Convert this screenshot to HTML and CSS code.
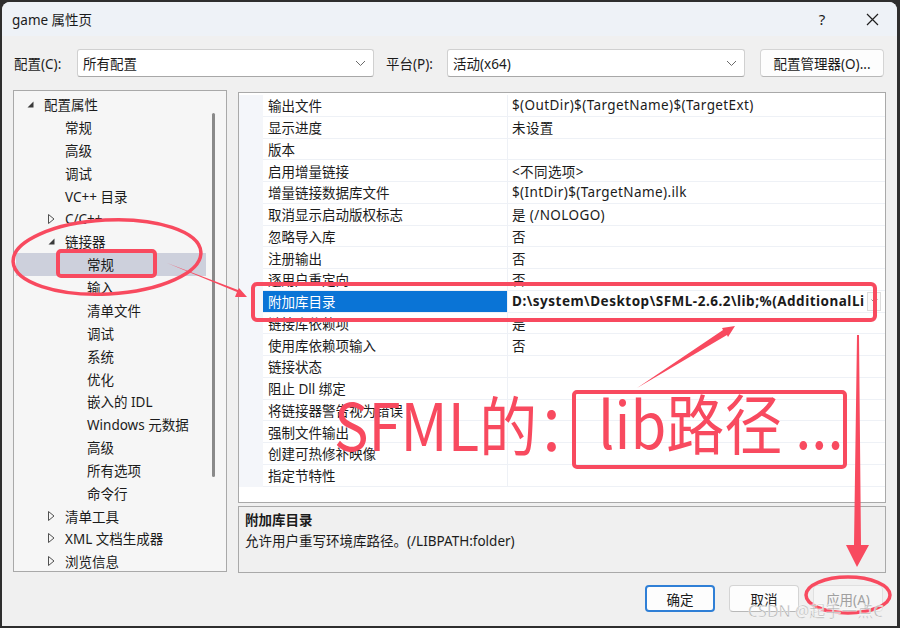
FILE: index.html
```html
<!DOCTYPE html>
<html>
<head>
<meta charset="utf-8">
<link rel="stylesheet" href="styles.css">
</head>
<body>
<div class="window">
  <div class="titlebar">
    <span class="title">game 属性页</span>
    <span class="tb-btn tb-help">?</span>
    <span class="tb-btn tb-close"><svg width="13" height="13" viewBox="0 0 13 13"><path d="M1 1L12 12M12 1L1 12" stroke="#1f1f1f" stroke-width="1.2"/></svg></span>
  </div>
  <div class="content">
    <div class="toprow">
      <span class="lbl lbl-config">配置(C):</span>
      <div class="select sel-config"><span class="sel-text">所有配置</span><svg class="chev" width="11" height="7" viewBox="0 0 11 7"><path d="M1 1L5.5 5.5L10 1" fill="none" stroke="#6a6a6a" stroke-width="1"/></svg></div>
      <span class="lbl lbl-platform">平台(P):</span>
      <div class="select sel-platform"><span class="sel-text">活动(x64)</span><svg class="chev" width="11" height="7" viewBox="0 0 11 7"><path d="M1 1L5.5 5.5L10 1" fill="none" stroke="#6a6a6a" stroke-width="1"/></svg></div>
      <button class="btn btn-mgr">配置管理器(O)...</button>
    </div>
    <div class="main">
      <div class="tree">
        <div class="tree-list">
          <div class="trow l0"><span class="tg"><svg width="7" height="7" viewBox="0 0 7 7"><path d="M6.5 0.5V6.5H0.5Z" fill="#3a3a3a"/></svg></span>配置属性</div>
          <div class="trow l1"><span class="tg"></span>常规</div>
          <div class="trow l1"><span class="tg"></span>高级</div>
          <div class="trow l1"><span class="tg"></span>调试</div>
          <div class="trow l1"><span class="tg"></span>VC++ 目录</div>
          <div class="trow l1"><span class="tg"><svg width="7" height="10" viewBox="0 0 7 10"><path d="M0.5 0.5L6 5L0.5 9.5Z" fill="none" stroke="#505050"/></svg></span>C/C++</div>
          <div class="trow l1"><span class="tg"><svg width="7" height="7" viewBox="0 0 7 7"><path d="M6.5 0.5V6.5H0.5Z" fill="#3a3a3a"/></svg></span>链接器</div>
          <div class="trow l2 sel"><span class="tg"></span>常规</div>
          <div class="trow l2"><span class="tg"></span>输入</div>
          <div class="trow l2"><span class="tg"></span>清单文件</div>
          <div class="trow l2"><span class="tg"></span>调试</div>
          <div class="trow l2"><span class="tg"></span>系统</div>
          <div class="trow l2"><span class="tg"></span>优化</div>
          <div class="trow l2"><span class="tg"></span>嵌入的 IDL</div>
          <div class="trow l2"><span class="tg"></span>Windows 元数据</div>
          <div class="trow l2"><span class="tg"></span>高级</div>
          <div class="trow l2"><span class="tg"></span>所有选项</div>
          <div class="trow l2"><span class="tg"></span>命令行</div>
          <div class="trow l1"><span class="tg"><svg width="7" height="10" viewBox="0 0 7 10"><path d="M0.5 0.5L6 5L0.5 9.5Z" fill="none" stroke="#505050"/></svg></span>清单工具</div>
          <div class="trow l1"><span class="tg"><svg width="7" height="10" viewBox="0 0 7 10"><path d="M0.5 0.5L6 5L0.5 9.5Z" fill="none" stroke="#505050"/></svg></span>XML 文档生成器</div>
          <div class="trow l1"><span class="tg"><svg width="7" height="10" viewBox="0 0 7 10"><path d="M0.5 0.5L6 5L0.5 9.5Z" fill="none" stroke="#505050"/></svg></span>浏览信息</div>
        </div>
        <div class="tree-scroll"><div class="thumb"></div></div>
      </div>
      <div class="right">
        <div class="grid">
          <div class="grow"><span class="gut"></span><span class="nm">输出文件</span><span class="vl">$(OutDir)$(TargetName)$(TargetExt)</span></div>
          <div class="grow"><span class="gut"></span><span class="nm">显示进度</span><span class="vl">未设置</span></div>
          <div class="grow"><span class="gut"></span><span class="nm">版本</span><span class="vl"></span></div>
          <div class="grow"><span class="gut"></span><span class="nm">启用增量链接</span><span class="vl">&lt;不同选项&gt;</span></div>
          <div class="grow"><span class="gut"></span><span class="nm">增量链接数据库文件</span><span class="vl">$(IntDir)$(TargetName).ilk</span></div>
          <div class="grow"><span class="gut"></span><span class="nm">取消显示启动版权标志</span><span class="vl">是 (/NOLOGO)</span></div>
          <div class="grow"><span class="gut"></span><span class="nm">忽略导入库</span><span class="vl">否</span></div>
          <div class="grow"><span class="gut"></span><span class="nm">注册输出</span><span class="vl">否</span></div>
          <div class="grow"><span class="gut"></span><span class="nm">逐用户重定向</span><span class="vl">否</span></div>
          <div class="grow sel"><span class="gut"></span><span class="nm">附加库目录</span><span class="vl"><span class="vtext">D:\system\Desktop\SFML-2.6.2\lib;%(AdditionalLi</span><span class="dd"><svg width="7" height="5" viewBox="0 0 7 5"><path d="M0.5 0.5L3.5 3.5L6.5 0.5" fill="none" stroke="#8a8a8a"/></svg></span></span></div>
          <div class="grow"><span class="gut"></span><span class="nm">链接库依赖项</span><span class="vl">是</span></div>
          <div class="grow"><span class="gut"></span><span class="nm">使用库依赖项输入</span><span class="vl">否</span></div>
          <div class="grow"><span class="gut"></span><span class="nm">链接状态</span><span class="vl"></span></div>
          <div class="grow"><span class="gut"></span><span class="nm">阻止 Dll 绑定</span><span class="vl"></span></div>
          <div class="grow"><span class="gut"></span><span class="nm">将链接器警告视为错误</span><span class="vl"></span></div>
          <div class="grow"><span class="gut"></span><span class="nm">强制文件输出</span><span class="vl"></span></div>
          <div class="grow"><span class="gut"></span><span class="nm">创建可热修补映像</span><span class="vl"></span></div>
          <div class="grow"><span class="gut"></span><span class="nm">指定节特性</span><span class="vl"></span></div>
        </div>
        <div class="desc">
          <div class="desc-title">附加库目录</div>
          <div class="desc-text">允许用户重写环境库路径。(/LIBPATH:folder)</div>
        </div>
      </div>
    </div>
    <div class="footer">
      <button class="btn fbtn ok">确定</button>
      <button class="btn fbtn">取消</button>
      <button class="btn fbtn disabled">应用(A)</button>
    </div>
  </div>
</div>
<svg class="annot" width="900" height="628" viewBox="0 0 900 628">
  <g fill="none" stroke="#f84a5f">
    <ellipse cx="107" cy="257" rx="94" ry="37" stroke-width="3.5" transform="rotate(-3 107 257)"/>
    <rect x="58" y="251" width="97" height="25" rx="3" stroke-width="4"/>
    <rect x="253" y="284" width="622" height="36" rx="4" stroke-width="4"/>
    <rect x="574" y="392" width="271" height="75" rx="3" stroke-width="4"/>
    <ellipse cx="848" cy="595" rx="42" ry="18" stroke-width="3.5"/>
  </g>
  <g fill="#f84a5f">
    <polygon points="167,263 237,292 235,297 247,297 239,288 238,290"/>
    <polygon points="637,388 723,330 722,328 735,326 728,337 727,335"/>
    <polygon points="857,335 859,335 861,545 869,545 857,567 846,545 854,545"/>
  </g>
  <text class="big" transform="translate(334 451) scale(1 1.12)">SFML的：</text>
  <text class="big" transform="translate(598 449) scale(1 1.12)">lib路径 ...</text>
  <text class="wm" x="748" y="617">CSDN @起手一点C</text>
</svg>
</body>
</html>
```
FILE: styles.css
```css
* { box-sizing: border-box; }
html, body { margin: 0; padding: 0; }
body {
  width: 900px;
  height: 628px;
  background: #2e2e2e;
  font-family: "Noto Sans", "Noto Sans CJK SC", sans-serif;
  font-size: 13.5px;
  color: #1b1b1b;
  overflow: hidden;
  position: relative;
}
.window {
  margin: 2px 3px 0 2px;
  height: 624px;
  background: #f0f0f0;
  border-radius: 8px 8px 0 0;
  display: flex;
  flex-direction: column;
  overflow: hidden;
}
.titlebar {
  height: 34px;
  background: #eef2f7;
  display: flex;
  align-items: center;
  padding-left: 10px;
}
.title { flex: 1; font-size: 13.5px; }
.tb-btn {
  width: 46px;
  height: 34px;
  display: flex;
  align-items: center;
  justify-content: center;
  font-size: 15px;
}
.tb-help { margin-right: 4px; }
.tb-close { margin-right: 2px; }
.content {
  flex: 1;
  display: flex;
  flex-direction: column;
  padding: 13px 11px 0 11px;
}
.toprow {
  display: flex;
  align-items: center;
  height: 28px;
  padding: 0 2px 0 1px;
}
.lbl { white-space: nowrap; }
.lbl-config { width: 63px; }
.lbl-platform { width: 61px; margin-left: 12px; }
.select {
  height: 28px;
  background: #fff;
  border: 1px solid #d0d0d0;
  border-bottom-color: #a8a8a8;
  border-radius: 3px;
  display: flex;
  align-items: center;
  padding: 0 7px 0 5px;
}
.sel-config { width: 297px; }
.sel-platform { width: 298px; }
.sel-text { flex: 1; }
.btn {
  font-family: inherit;
  font-size: 13.5px;
  color: #1b1b1b;
  background: #fdfdfd;
  border: 1px solid #d4d4d4;
  border-bottom-color: #b8b8b8;
  border-radius: 4px;
  padding: 0;
}
.btn-mgr { width: 124px; height: 28px; margin-left: 15px; }
.main {
  display: flex;
  margin-top: 13px;
  height: 483px;
}
.tree {
  width: 214px;
  height: 482px;
  border: 1px solid #a9a9a9;
  background: #f6f6f6;
  display: flex;
}
.tree-list {
  width: 192px;
  padding: 2px 0 0 2px;
}
.trow {
  height: 22.85px;
  display: flex;
  align-items: center;
  white-space: nowrap;
}
.trow.l0 { padding-left: 6px; }
.trow.l1 { padding-left: 27px; }
.trow.l2 { padding-left: 49px; }
.trow.sel { background: #cdd0dc; }
.tg {
  width: 16px;
  margin-right: 6px;
  display: flex;
  justify-content: center;
  align-items: center;
}
.tree-scroll { flex: 1; padding-top: 22px; }
.thumb {
  margin-left: 6px;
  width: 3px;
  height: 364px;
  background: #8a8a8a;
  border-radius: 2px;
}
.right {
  flex: 1;
  margin-left: 11px;
  display: flex;
  flex-direction: column;
}
.grid {
  margin-top: 2px;
  height: 411px;
  border: 1px solid #a9a9a9;
  background: #fff;
  padding-top: 2px;
  overflow: hidden;
}
.grow {
  height: 21.76px;
  display: grid;
  grid-template-columns: 24px 245px 1fr;
}
.gut { background: #f4f6fa; }
.nm, .vl {
  border-bottom: 1px solid #eef1f6;
  display: flex;
  align-items: center;
  white-space: nowrap;
  overflow: hidden;
}
.nm { padding-left: 5px; border-right: 1px solid #eef1f6; }
.vl { padding-left: 4px; letter-spacing: 0.4px; }
.grow.sel .nm { background: #0a74d6; color: #fff; }
.grow.sel .vl { font-weight: bold; padding-right: 4px; letter-spacing: 0.5px; }
.vtext { flex: 1; overflow: hidden; white-space: nowrap; }
.dd {
  width: 14px;
  height: 19px;
  border: 1px solid #dcdcdc;
  background: #fafafa;
  display: flex;
  align-items: center;
  justify-content: center;
}
.desc {
  margin-top: 3px;
  height: 67px;
  border: 1px solid #a9a9a9;
  background: #f0f0f0;
  padding: 3px 6px 0 6px;
  line-height: 21px;
}
.desc-title { font-weight: bold; }
.footer {
  margin-top: 12px;
  display: flex;
  justify-content: flex-end;
  gap: 14px;
  padding-right: 3px;
}
.fbtn { width: 70px; height: 27px; }
.fbtn.ok { border: 2px solid #2f7fd6; }
.fbtn.disabled { color: #a0a0a0; background: #f5f5f5; border-color: #e0e0e0; }
.annot {
  position: absolute;
  left: 0;
  top: 0;
  pointer-events: none;
}
.big {
  font-family: "Noto Sans CJK SC", sans-serif;
  font-size: 58px;
  fill: #f84a5f;
}
.wm {
  font-family: "Noto Sans", "Noto Sans CJK SC", sans-serif;
  font-size: 16px;
  fill: #b0b0b0;
  stroke: #ffffff;
  stroke-width: 0.4px;
}
```
